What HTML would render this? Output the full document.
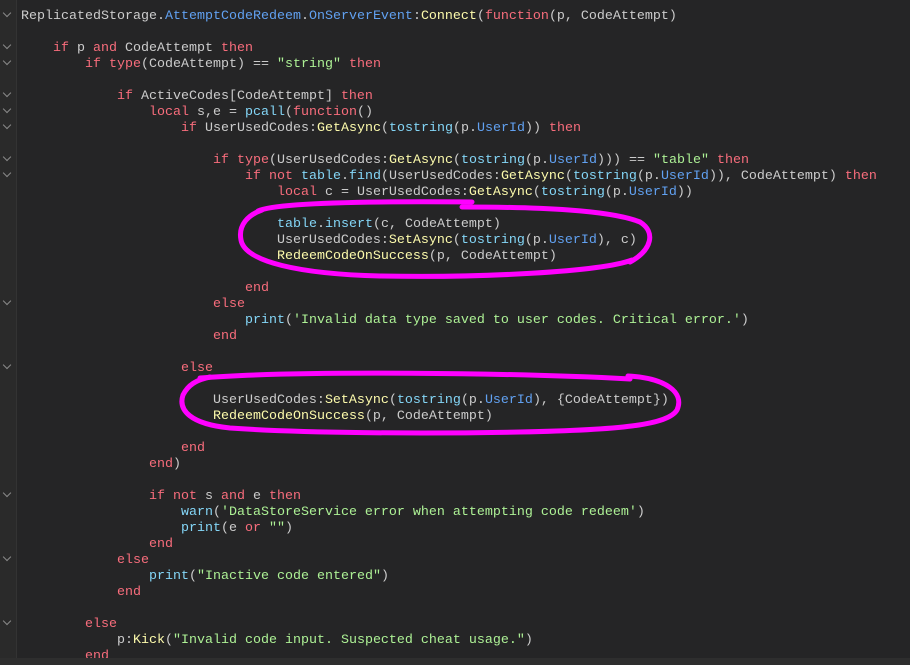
<!DOCTYPE html>
<html><head><meta charset="utf-8"><style>
body{margin:0;width:910px;height:665px;background:#252526;overflow:hidden;position:relative;font-family:"Liberation Mono",monospace;font-size:13.33px}
.g{position:absolute;left:0;top:0;width:16px;height:658px;background:#2a2a2a;border-right:1px solid #333}
.bot{position:absolute;left:0;top:658px;width:910px;height:7px;background:#2e2e2e}
.l{position:absolute;left:21px;white-space:pre;color:#cccccc;line-height:16px;height:16px;margin-top:2px}
.k{color:#f86d7c}.b{color:#84d6f7}.p{color:#61a1f1}.s{color:#adf195}.m{color:#fdfbac}
.c{position:absolute;left:4px;width:5px;height:5px;border-right:1.5px solid #8a8a8a;border-bottom:1.5px solid #8a8a8a;transform:rotate(45deg)}
svg{position:absolute;left:0;top:0}
</style></head><body>
<div class="g"></div>
<div class="c" style="top:10px"></div><div class="c" style="top:42px"></div><div class="c" style="top:58px"></div>
<div class="c" style="top:90px"></div><div class="c" style="top:106px"></div><div class="c" style="top:122px"></div>
<div class="c" style="top:154px"></div><div class="c" style="top:170px"></div><div class="c" style="top:298px"></div>
<div class="c" style="top:362px"></div><div class="c" style="top:490px"></div><div class="c" style="top:554px"></div>
<div class="c" style="top:618px"></div>
<div class="l" style="top:7px">ReplicatedStorage.<span class="p">AttemptCodeRedeem</span>.<span class="p">OnServerEvent</span>:<span class="m">Connect</span>(<span class="k">function</span>(p, CodeAttempt)</div>
<div class="l" style="top:39px">    <span class="k">if</span> p <span class="k">and</span> CodeAttempt <span class="k">then</span></div>
<div class="l" style="top:55px">        <span class="k">if</span> <span class="k">type</span>(CodeAttempt) == <span class="s">"string"</span> <span class="k">then</span></div>
<div class="l" style="top:87px">            <span class="k">if</span> ActiveCodes[CodeAttempt] <span class="k">then</span></div>
<div class="l" style="top:103px">                <span class="k">local</span> s,e = <span class="b">pcall</span>(<span class="k">function</span>()</div>
<div class="l" style="top:119px">                    <span class="k">if</span> UserUsedCodes:<span class="m">GetAsync</span>(<span class="b">tostring</span>(p.<span class="p">UserId</span>)) <span class="k">then</span></div>
<div class="l" style="top:151px">                        <span class="k">if</span> <span class="k">type</span>(UserUsedCodes:<span class="m">GetAsync</span>(<span class="b">tostring</span>(p.<span class="p">UserId</span>))) == <span class="s">"table"</span> <span class="k">then</span></div>
<div class="l" style="top:167px">                            <span class="k">if not</span> <span class="b">table</span>.<span class="b">find</span>(UserUsedCodes:<span class="m">GetAsync</span>(<span class="b">tostring</span>(p.<span class="p">UserId</span>)), CodeAttempt) <span class="k">then</span></div>
<div class="l" style="top:183px">                                <span class="k">local</span> c = UserUsedCodes:<span class="m">GetAsync</span>(<span class="b">tostring</span>(p.<span class="p">UserId</span>))</div>
<div class="l" style="top:215px">                                <span class="b">table</span>.<span class="b">insert</span>(c, CodeAttempt)</div>
<div class="l" style="top:231px">                                UserUsedCodes:<span class="m">SetAsync</span>(<span class="b">tostring</span>(p.<span class="p">UserId</span>), c)</div>
<div class="l" style="top:247px">                                <span class="m">RedeemCodeOnSuccess</span>(p, CodeAttempt)</div>
<div class="l" style="top:279px">                            <span class="k">end</span></div>
<div class="l" style="top:295px">                        <span class="k">else</span></div>
<div class="l" style="top:311px">                            <span class="b">print</span>(<span class="s">'Invalid data type saved to user codes. Critical error.'</span>)</div>
<div class="l" style="top:327px">                        <span class="k">end</span></div>
<div class="l" style="top:359px">                    <span class="k">else</span></div>
<div class="l" style="top:391px">                        UserUsedCodes:<span class="m">SetAsync</span>(<span class="b">tostring</span>(p.<span class="p">UserId</span>), {CodeAttempt})</div>
<div class="l" style="top:407px">                        <span class="m">RedeemCodeOnSuccess</span>(p, CodeAttempt)</div>
<div class="l" style="top:439px">                    <span class="k">end</span></div>
<div class="l" style="top:455px">                <span class="k">end</span>)</div>
<div class="l" style="top:487px">                <span class="k">if not</span> s <span class="k">and</span> e <span class="k">then</span></div>
<div class="l" style="top:503px">                    <span class="b">warn</span>(<span class="s">'DataStoreService error when attempting code redeem'</span>)</div>
<div class="l" style="top:519px">                    <span class="b">print</span>(e <span class="k">or</span> <span class="s">""</span>)</div>
<div class="l" style="top:535px">                <span class="k">end</span></div>
<div class="l" style="top:551px">            <span class="k">else</span></div>
<div class="l" style="top:567px">                <span class="b">print</span>(<span class="s">"Inactive code entered"</span>)</div>
<div class="l" style="top:583px">            <span class="k">end</span></div>
<div class="l" style="top:615px">        <span class="k">else</span></div>
<div class="l" style="top:631px">            p:<span class="m">Kick</span>(<span class="s">"Invalid code input. Suspected cheat usage."</span>)</div>
<div class="l" style="top:647px">        <span class="k">end</span></div>
<svg width="910" height="665" fill="none" stroke="#ff00ff" stroke-width="5" stroke-linecap="round">
<path d="M258 211 C275 203 360 201 472 202"/>
<path d="M462 207 C540 207 610 210 640 222 C656 232 652 250 630 262"/>
<path d="M632 260 C600 272 480 278 380 276 C300 274 245 262 241 240 C238 225 248 215 262 210"/>
<path d="M200 378 C300 370 520 373 630 379"/>
<path d="M628 376 C665 378 685 392 677 410 C668 425 620 430 520 432 C420 434 300 433 230 428 C190 424 178 410 183 395 C188 385 196 380 210 377"/>
</svg>
<div class="bot"></div>
</body></html>
